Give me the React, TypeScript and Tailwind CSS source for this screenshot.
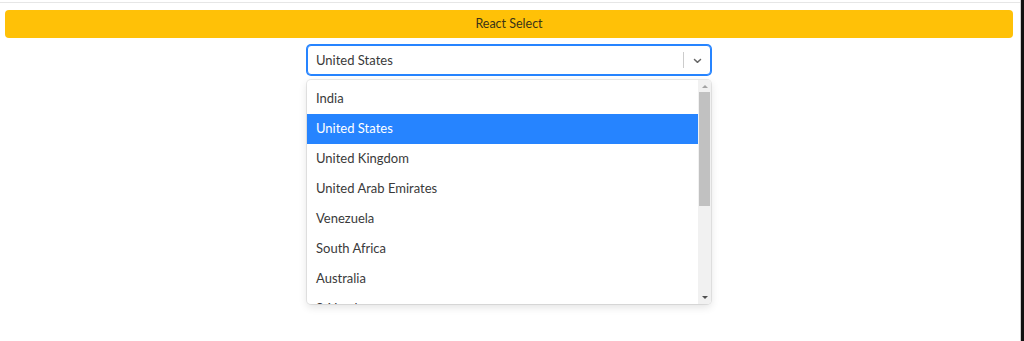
import React from "react";

const options = [
  "India",
  "United States",
  "United Kingdom",
  "United Arab Emirates",
  "Venezuela",
  "South Africa",
  "Australia",
  "Sri Lanka",
];

export default function App() {
  return (
    <div
      className="flex h-[341px] w-[1024px] bg-white overflow-hidden"
      style={{ fontFamily: "Lato, 'Open Sans', sans-serif" }}
    >
      <div className="flex flex-1 flex-col">
        <div className="mt-[2px] h-px bg-[#e6e6e6]" />
        <div className="ml-[5px] mr-[7px] mt-[7px] flex h-[28px] items-center justify-center rounded-[4px] bg-[#ffc107] pt-[1px] text-[12.5px] text-[#3a3318]">
          React Select
        </div>
        <div className="mt-[7px] flex justify-center pr-[2px]">
          <div className="flex w-[404px] flex-col">
            <div className="flex h-[30px] items-center rounded-[4px] border border-[#2684ff] shadow-[0_0_0_1px_#2684ff] bg-white">
              <div className="flex-1 pl-[8px] pt-[1px] text-[13px] text-[#3a3a3a]">United States</div>
              <div className="h-[16px] w-px bg-[#cccccc]" />
              <div className="flex w-[26px] items-center justify-center text-[#666]">
                <svg width="13" height="13" viewBox="0 0 20 20" fill="currentColor">
                  <path d="M4.516 7.548c0.436-0.446 1.043-0.481 1.576 0l3.908 3.747 3.908-3.747c0.533-0.481 1.141-0.446 1.574 0 0.436 0.445 0.408 1.197 0 1.615-0.406 0.418-4.695 4.502-4.695 4.502-0.217 0.223-0.502 0.335-0.787 0.335s-0.57-0.112-0.789-0.335c0 0-4.287-4.084-4.695-4.502s-0.436-1.17 0-1.615z" />
                </svg>
              </div>
            </div>
            <div className="mt-[5px] flex h-[224px] overflow-hidden rounded-[4px] bg-white shadow-[0_0_0_1px_rgba(0,0,0,0.08),0_3px_9px_rgba(0,0,0,0.12)]">
              <div className="flex flex-1 flex-col overflow-hidden pt-[4px]">
                {options.map((o) => (
                  <div
                    key={o}
                    className={
                      o === "United States"
                        ? "flex h-[30px] shrink-0 items-center bg-[#2684ff] pl-[9px] text-[13px] text-white"
                        : "flex h-[30px] shrink-0 items-center pl-[9px] text-[13px] text-[#3a3a3a]"
                    }
                  >
                    {o}
                  </div>
                ))}
              </div>
              <div className="flex w-[13px] flex-col bg-[#f1f1f1]">
                <div className="flex h-[12px] items-center justify-center">
                  <div className="h-0 w-0 border-x-[3px] border-b-[3px] border-x-transparent border-b-[#a3a3a3]" />
                </div>
                <div className="mx-[1px] h-[114px] bg-[#c1c1c1]" />
                <div className="flex-1" />
                <div className="flex h-[14px] items-center justify-center">
                  <div className="h-0 w-0 border-x-[3px] border-t-[3px] border-x-transparent border-t-[#505050]" />
                </div>
              </div>
            </div>
          </div>
        </div>
      </div>
      <div className="w-px bg-[#d0d0d0]" />
      <div className="w-[3px] bg-[#111]" />
    </div>
  );
}
